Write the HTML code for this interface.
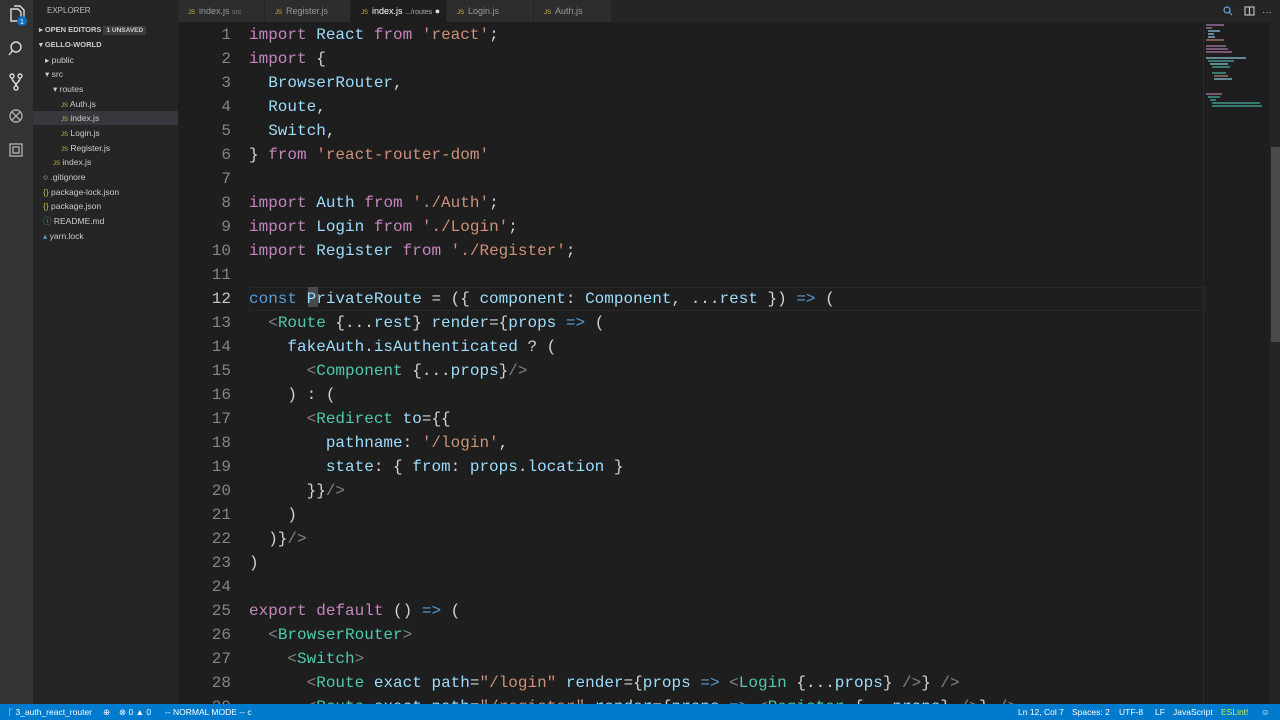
<!DOCTYPE html>
<html><head><meta charset="utf-8"><style>
*{margin:0;padding:0;box-sizing:border-box}
body{width:1280px;height:720px;overflow:hidden;background:#1e1e1e;font-family:"Liberation Sans",sans-serif;position:relative}
#act{position:absolute;left:0;top:0;width:33px;height:704px;background:#333}
#side{position:absolute;left:33px;top:0;width:145px;height:704px;background:#252526;color:#ccc;font-size:8.5px}
#side .r{position:absolute;height:14px;line-height:14px;white-space:nowrap}
#tabs{position:absolute;left:178px;top:0;width:1102px;height:22px;background:#252526}
.tab{position:absolute;top:0;height:22px;line-height:22px;background:#2d2d2d;color:#999;font-size:9px;padding-left:10px}
.tab b{color:#d7ba3a;font-size:6px;font-weight:normal;margin-right:4px}
#code{position:absolute;left:178px;top:22px;width:1092px;height:682px;font-family:"Liberation Mono",monospace;font-size:16px}
.ln{position:absolute;left:0;width:53px;text-align:right;color:#858585;height:24px;line-height:24px}
.cl{position:absolute;left:71px;height:24px;line-height:24px;white-space:pre;color:#d4d4d4}
.k{color:#c586c0}.c{color:#569cd6}.v{color:#9cdcfe}.s{color:#ce9178}.t{color:#4ec9b0}.g{color:#808080}
#status{position:absolute;left:0;top:704px;width:1280px;height:16px;background:#007acc;color:#fff;font-size:8.5px;line-height:16px}
.mm{position:absolute;height:1.5px;opacity:.55}
</style></head><body>
<div id="act">
<svg width="33" height="170" style="position:absolute;left:0;top:0">
<g fill="none" stroke="#ddd" stroke-width="1.4">
<path d="M11 9h7l3 3v9h-10z M14 6h6l4 4v9"/>
<circle cx="16" cy="47" r="5"/><path d="M12.5 50.5 9 55"/>
<circle cx="12" cy="76" r="2"/><circle cx="20" cy="76" r="2"/><circle cx="16" cy="88" r="2"/><path d="M12 78c0 4 4 4 4 8M20 78c0 4-4 4-4 8"/>
<circle cx="16" cy="116" r="6" stroke="#aaa"/><path d="M12 112l8 8M20 112l-8 8" stroke="#aaa"/>
<rect x="10" y="144" width="12" height="12" stroke="#aaa"/><rect x="13" y="147" width="6" height="6" stroke="#aaa"/>
</g>
<circle cx="22" cy="21" r="5" fill="#0e70c0"/><text x="22" y="24" fill="#fff" font-size="7" text-anchor="middle" font-family="Liberation Sans">1</text>
</svg>
</div>
<div id="side">
<div class="r" style="left:14px;top:4px;color:#bbb;font-size:8px">EXPLORER</div>
<div class="r" style="left:6px;top:23px;font-weight:bold;font-size:7.5px">▸ OPEN EDITORS <span style="background:#3c3c3c;padding:1px 3px;font-size:6.5px">1 UNSAVED</span></div>
<div class="r" style="left:6px;top:38px;font-weight:bold;font-size:7.5px">▾ GELLO-WORLD</div>
<div class="r" style="left:12px;top:53px">▸ public</div>
<div class="r" style="left:12px;top:67px">▾ src</div>
<div class="r" style="left:20px;top:82px">▾ routes</div>
<div class="r" style="left:28px;top:97px"><span style="color:#cbb648;font-size:6px">JS</span> Auth.js</div>
<div class="r" style="left:0;top:111px;width:145px;background:#37373d;padding-left:28px"><span style="color:#cbb648;font-size:6px">JS</span> index.js</div>
<div class="r" style="left:28px;top:126px"><span style="color:#cbb648;font-size:6px">JS</span> Login.js</div>
<div class="r" style="left:28px;top:141px"><span style="color:#cbb648;font-size:6px">JS</span> Register.js</div>
<div class="r" style="left:20px;top:155px"><span style="color:#cbb648;font-size:6px">JS</span> index.js</div>
<div class="r" style="left:10px;top:170px">○ .gitignore</div>
<div class="r" style="left:10px;top:185px"><span style="color:#cbb648">{}</span> package-lock.json</div>
<div class="r" style="left:10px;top:199px"><span style="color:#cbb648">{}</span> package.json</div>
<div class="r" style="left:10px;top:214px"><span style="color:#519aba">ⓘ</span> README.md</div>
<div class="r" style="left:10px;top:229px"><span style="color:#519aba">▴</span> yarn.lock</div>
</div>
<div id="tabs">
<div class="tab" style="left:0;width:86px"><b>JS</b>index.js <span style="font-size:7px;color:#777">src</span></div>
<div class="tab" style="left:87px;width:85px"><b>JS</b>Register.js</div>
<div class="tab" style="left:173px;width:95px;background:#1e1e1e;color:#fff"><b>JS</b>index.js <span style="font-size:7px;color:#aaa">.../routes</span> <span style="color:#ddd">●</span></div>
<div class="tab" style="left:269px;width:86px"><b>JS</b>Login.js</div>
<div class="tab" style="left:356px;width:77px"><b>JS</b>Auth.js</div>
<svg width="60" height="22" style="position:absolute;right:0;top:0"><g stroke="#bbb" fill="none" stroke-width="1.2"><rect x="25" y="7" width="9" height="8"/><path d="M29.5 7v8"/><circle cx="7" cy="10" r="3" stroke="#6aa4d8"/><path d="M9 12l3 3" stroke="#6aa4d8"/></g><text x="42" y="15" fill="#bbb" font-size="10">···</text></svg>
</div>
<div id="code">
<div style="position:absolute;left:71px;top:265px;width:957px;height:24px;border:1px solid #282828"></div>
<div style="position:absolute;left:130px;top:265px;width:10px;height:20px;background:#666;opacity:.6"></div>
<div style="position:absolute;left:1025px;top:0;width:1px;height:682px;background:#2a2a2a"></div>
<div class="mm" style="left:1028px;top:2px;width:18px;background:#c586c0"></div>
<div class="mm" style="left:1028px;top:5px;width:6px;background:#c586c0"></div>
<div class="mm" style="left:1030px;top:8px;width:12px;background:#9cdcfe"></div>
<div class="mm" style="left:1030px;top:11px;width:6px;background:#9cdcfe"></div>
<div class="mm" style="left:1030px;top:14px;width:7px;background:#9cdcfe"></div>
<div class="mm" style="left:1028px;top:17px;width:18px;background:#ce9178"></div>
<div class="mm" style="left:1028px;top:23px;width:20px;background:#c586c0"></div>
<div class="mm" style="left:1028px;top:26px;width:22px;background:#c586c0"></div>
<div class="mm" style="left:1028px;top:29px;width:26px;background:#c586c0"></div>
<div class="mm" style="left:1028px;top:35px;width:40px;background:#9cdcfe"></div>
<div class="mm" style="left:1030px;top:38px;width:26px;background:#4ec9b0"></div>
<div class="mm" style="left:1032px;top:41px;width:18px;background:#9cdcfe"></div>
<div class="mm" style="left:1034px;top:44px;width:18px;background:#4ec9b0"></div>
<div class="mm" style="left:1034px;top:50px;width:14px;background:#4ec9b0"></div>
<div class="mm" style="left:1036px;top:53px;width:14px;background:#ce9178"></div>
<div class="mm" style="left:1036px;top:56px;width:18px;background:#9cdcfe"></div>
<div class="mm" style="left:1028px;top:71px;width:16px;background:#c586c0"></div>
<div class="mm" style="left:1030px;top:74px;width:12px;background:#4ec9b0"></div>
<div class="mm" style="left:1032px;top:77px;width:6px;background:#4ec9b0"></div>
<div class="mm" style="left:1034px;top:80px;width:48px;background:#4ec9b0"></div>
<div class="mm" style="left:1034px;top:83px;width:50px;background:#4ec9b0"></div>
<div class="ln" style="top:1px">1</div><div class="cl" style="top:1px"><span class="k">import</span> <span class="v">React</span> <span class="k">from</span> <span class="s">'react'</span>;</div>
<div class="ln" style="top:25px">2</div><div class="cl" style="top:25px"><span class="k">import</span> {</div>
<div class="ln" style="top:49px">3</div><div class="cl" style="top:49px">  <span class="v">BrowserRouter</span>,</div>
<div class="ln" style="top:73px">4</div><div class="cl" style="top:73px">  <span class="v">Route</span>,</div>
<div class="ln" style="top:97px">5</div><div class="cl" style="top:97px">  <span class="v">Switch</span>,</div>
<div class="ln" style="top:121px">6</div><div class="cl" style="top:121px">} <span class="k">from</span> <span class="s">'react-router-dom'</span></div>
<div class="ln" style="top:145px">7</div>
<div class="ln" style="top:169px">8</div><div class="cl" style="top:169px"><span class="k">import</span> <span class="v">Auth</span> <span class="k">from</span> <span class="s">'./Auth'</span>;</div>
<div class="ln" style="top:193px">9</div><div class="cl" style="top:193px"><span class="k">import</span> <span class="v">Login</span> <span class="k">from</span> <span class="s">'./Login'</span>;</div>
<div class="ln" style="top:217px">10</div><div class="cl" style="top:217px"><span class="k">import</span> <span class="v">Register</span> <span class="k">from</span> <span class="s">'./Register'</span>;</div>
<div class="ln" style="top:241px">11</div>
<div class="ln" style="top:265px;color:#c6c6c6">12</div><div class="cl" style="top:265px"><span class="c">const</span> <span class="v">PrivateRoute</span> = ({ <span class="v">component</span>: <span class="v">Component</span>, ...<span class="v">rest</span> }) <span class="c">=&gt;</span> (</div>
<div class="ln" style="top:289px">13</div><div class="cl" style="top:289px">  <span class="g">&lt;</span><span class="t">Route</span> {...<span class="v">rest</span>} <span class="v">render</span>={<span class="v">props</span> <span class="c">=&gt;</span> (</div>
<div class="ln" style="top:313px">14</div><div class="cl" style="top:313px">    <span class="v">fakeAuth</span>.<span class="v">isAuthenticated</span> ? (</div>
<div class="ln" style="top:337px">15</div><div class="cl" style="top:337px">      <span class="g">&lt;</span><span class="t">Component</span> {...<span class="v">props</span>}<span class="g">/&gt;</span></div>
<div class="ln" style="top:361px">16</div><div class="cl" style="top:361px">    ) : (</div>
<div class="ln" style="top:385px">17</div><div class="cl" style="top:385px">      <span class="g">&lt;</span><span class="t">Redirect</span> <span class="v">to</span>={{</div>
<div class="ln" style="top:409px">18</div><div class="cl" style="top:409px">        <span class="v">pathname</span>: <span class="s">'/login'</span>,</div>
<div class="ln" style="top:433px">19</div><div class="cl" style="top:433px">        <span class="v">state</span>: { <span class="v">from</span>: <span class="v">props</span>.<span class="v">location</span> }</div>
<div class="ln" style="top:457px">20</div><div class="cl" style="top:457px">      }}<span class="g">/&gt;</span></div>
<div class="ln" style="top:481px">21</div><div class="cl" style="top:481px">    )</div>
<div class="ln" style="top:505px">22</div><div class="cl" style="top:505px">  )}<span class="g">/&gt;</span></div>
<div class="ln" style="top:529px">23</div><div class="cl" style="top:529px">)</div>
<div class="ln" style="top:553px">24</div>
<div class="ln" style="top:577px">25</div><div class="cl" style="top:577px"><span class="k">export</span> <span class="k">default</span> () <span class="c">=&gt;</span> (</div>
<div class="ln" style="top:601px">26</div><div class="cl" style="top:601px">  <span class="g">&lt;</span><span class="t">BrowserRouter</span><span class="g">&gt;</span></div>
<div class="ln" style="top:625px">27</div><div class="cl" style="top:625px">    <span class="g">&lt;</span><span class="t">Switch</span><span class="g">&gt;</span></div>
<div class="ln" style="top:649px">28</div><div class="cl" style="top:649px">      <span class="g">&lt;</span><span class="t">Route</span> <span class="v">exact</span> <span class="v">path</span>=<span class="s">"/login"</span> <span class="v">render</span>={<span class="v">props</span> <span class="c">=&gt;</span> <span class="g">&lt;</span><span class="t">Login</span> {...<span class="v">props</span>} <span class="g">/&gt;</span>} <span class="g">/&gt;</span></div>
<div class="ln" style="top:673px">29</div><div class="cl" style="top:673px">      <span class="g">&lt;</span><span class="t">Route</span> <span class="v">exact</span> <span class="v">path</span>=<span class="s">"/register"</span> <span class="v">render</span>={<span class="v">props</span> <span class="c">=&gt;</span> <span class="g">&lt;</span><span class="t">Register</span> {...<span class="v">props</span>} <span class="g">/&gt;</span>} <span class="g">/&gt;</span></div>
</div>
<div style="position:absolute;left:1270px;top:22px;width:10px;height:682px;background:#252526"></div>
<div style="position:absolute;left:1271px;top:147px;width:9px;height:195px;background:#4a4a4a"></div>
<div id="status">
<span style="position:absolute;left:8px">ᚴ 3_auth_react_router</span>
<span style="position:absolute;left:103px">⊕</span>
<span style="position:absolute;left:119px">⊗ 0 ▲ 0</span>
<span style="position:absolute;left:165px">-- NORMAL MODE -- c</span>
<span style="position:absolute;left:1018px">Ln 12, Col 7</span>
<span style="position:absolute;left:1072px">Spaces: 2</span>
<span style="position:absolute;left:1119px">UTF-8</span>
<span style="position:absolute;left:1155px">LF</span>
<span style="position:absolute;left:1173px">JavaScript</span>
<span style="position:absolute;left:1221px;color:#c8f03c">ESLint!</span>
<span style="position:absolute;left:1261px">☺</span>
</div>
</body></html>
